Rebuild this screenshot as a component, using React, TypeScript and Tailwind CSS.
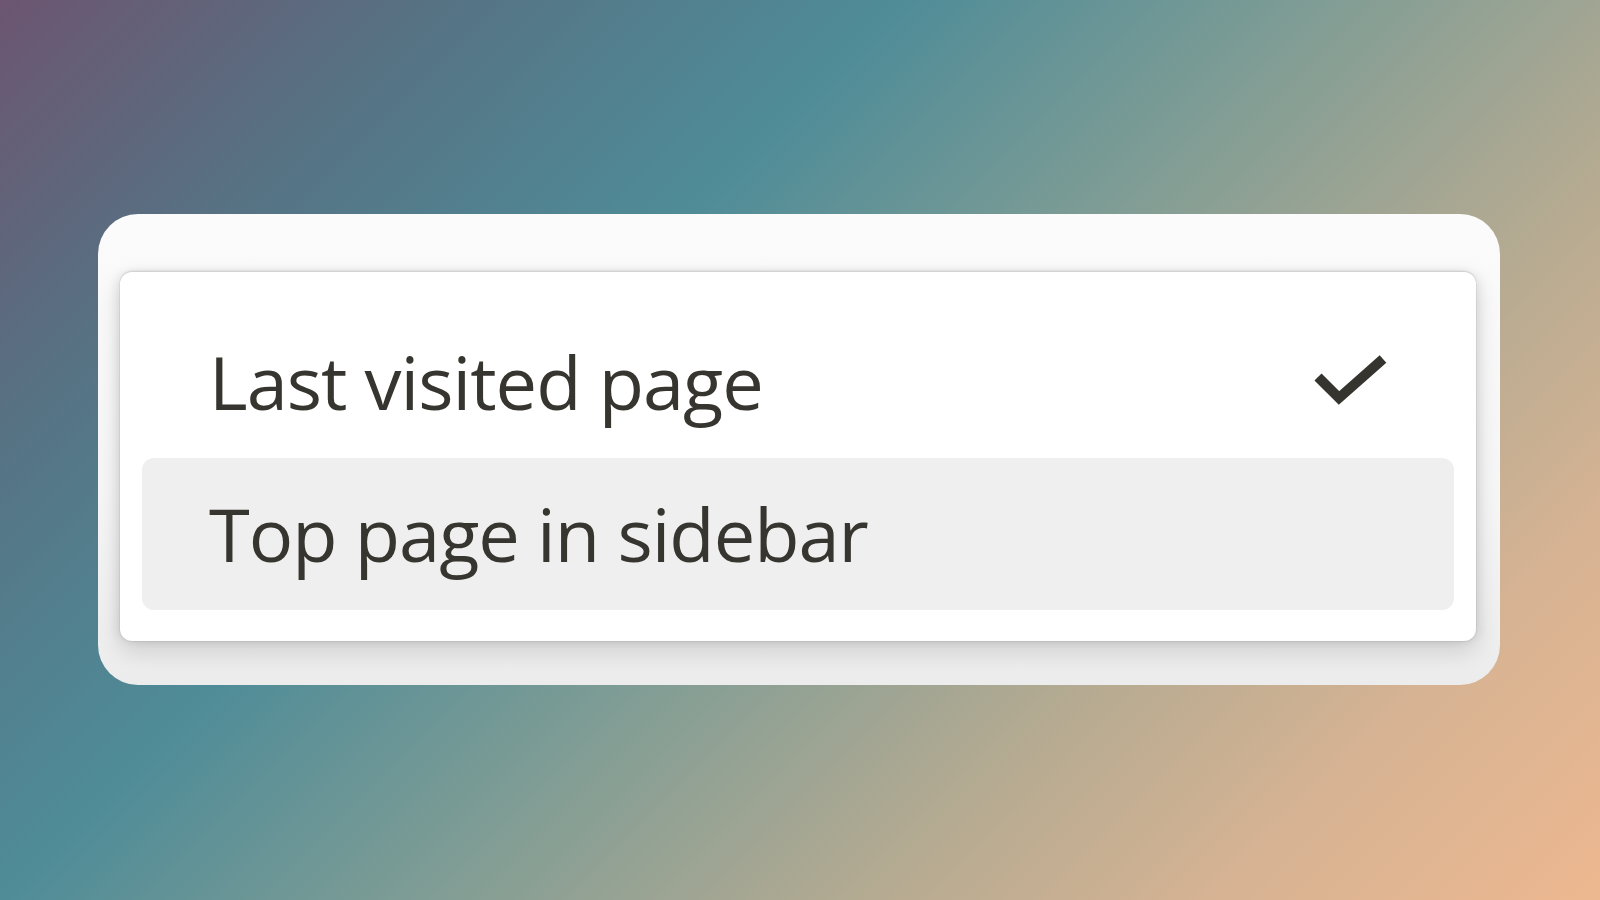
const OPTIONS = [
  { label: 'Last visited page', selected: true, hovered: false },
  { label: 'Top page in sidebar', selected: false, hovered: true },
];

function CheckMark() {
  return (
    <svg width="76" height="56" viewBox="0 0 76 56" fill="none" className="shrink-0">
      <path d="M5 23 L26 44 L70 5" stroke="#35342f" strokeWidth="10" strokeLinecap="butt" strokeLinejoin="miter" />
    </svg>
  );
}

export default function App() {
  return (
    <div className="w-full h-[900px] overflow-hidden bg-[linear-gradient(135deg,#6c5571_0%,#567384_18%,#4f8c98_36%,#7d9c95_52%,#b3aa92_70%,#d7b393_85%,#edb890_100%)]">
      <div className="pl-[98px] pt-[214px]">
        <div className="w-[1402px] h-[471px] rounded-[40px] bg-[linear-gradient(180deg,#fbfbfb_0%,#f6f6f6_60%,#ececec_100%)] pl-[22px] pr-[24px] pt-[58px] pb-[44px]">
          <div className="h-full rounded-[12px] bg-white pt-[34px] pb-[31px] px-[22px] flex flex-col shadow-[0_0_0_1px_rgba(0,0,0,0.05),0_-2px_0_rgba(0,0,0,0.04),0_10px_24px_rgba(0,0,0,0.14),-4px_0_10px_rgba(0,0,0,0.06),4px_0_10px_rgba(0,0,0,0.06)]">
            {OPTIONS.map((o) => (
              <div
                key={o.label}
                className={`h-[152px] shrink-0 rounded-[12px] flex items-center justify-between pl-[67px] pr-[65px] ${o.hovered ? 'bg-[#efefef]' : ''}`}
              >
                <span className="text-[74px] leading-none text-[#37352f] tracking-[-1px] font-['Open_Sans',sans-serif]">
                  {o.label}
                </span>
                {o.selected && <CheckMark />}
              </div>
            ))}
          </div>
        </div>
      </div>
    </div>
  );
}
